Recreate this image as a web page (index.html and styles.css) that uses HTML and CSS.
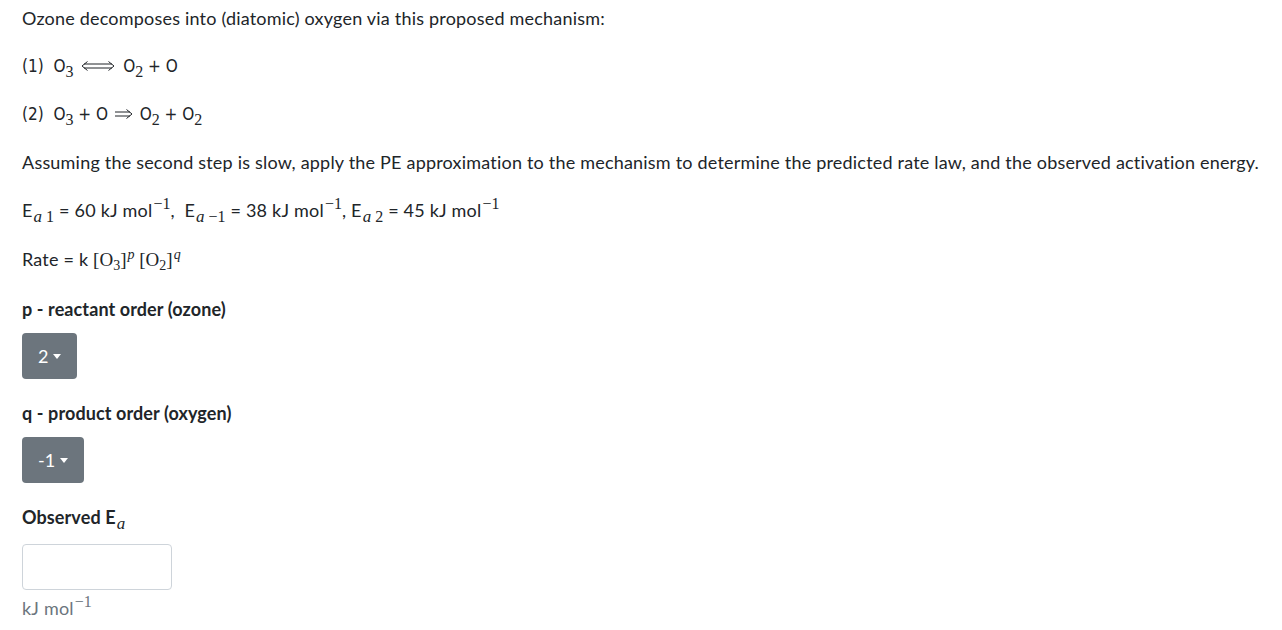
FILE: index.html
```html
<!DOCTYPE html>
<html lang="en">
<head>
    <meta charset="UTF-8">
    <title>Ozone decomposition</title>
    <link rel="stylesheet" href="styles.css">
</head>
<body>
<div class="question">
    <p>Ozone decomposes into (diatomic) oxygen via this proposed mechanism:</p>
    <p class="step">(1)&nbsp; O<sub class="num">3</sub>
        <svg class="arrow long" width="34" height="10" viewBox="0 0 34 10">
            <path d="M3 3H31M3 7H31M6.5 0.5L1 5L6.5 9.5M27.5 0.5L33 5L27.5 9.5" />
        </svg>
        O<sub class="num">2</sub> + O</p>
    <p class="step">(2)&nbsp; O<sub class="num">3</sub> + O
        <svg class="arrow" width="18" height="10" viewBox="0 0 18 10">
            <path d="M0 3H15M0 7H15M11.5 0.5L17 5L11.5 9.5" />
        </svg>
        O<sub class="num">2</sub> + O<sub class="num">2</sub></p>
    <p>Assuming the second step is slow, apply the PE approximation to the mechanism to determine the predicted rate law, and the observed activation energy.</p>
    <p>E<sub class="ea"><i>a</i> 1</sub>= 60 kJ mol<sup class="num">&minus;1</sup>,&nbsp; E<sub class="ea"><i>a</i> &minus;1</sub>= 38 kJ mol<sup class="num">&minus;1</sup>, E<sub class="ea"><i>a</i> 2</sub>= 45 kJ mol<sup class="num">&minus;1</sup></p>
    <p class="rate">Rate = k <span class="math">[O<sub>3</sub>]<sup><i>p</i></sup> [O<sub>2</sub>]<sup><i>q</i></sup></span></p>

    <!-- 反应物级数 -->
    <p class="label">p - reactant order (ozone)</p>
    <div class="dropdown">
        <button type="button" class="btn">2<span class="caret"></span></button>
    </div>

    <!-- 产物级数 -->
    <p class="label">q - product order (oxygen)</p>
    <div class="dropdown">
        <button type="button" class="btn">-1<span class="caret"></span></button>
    </div>

    <!-- 表观活化能 -->
    <p class="label">Observed E<sub class="ea"><i>a</i></sub></p>
    <input type="text" class="answer">
    <p class="unit">kJ mol<sup class="num">&minus;1</sup></p>
</div>
</body>
</html>
```

FILE: styles.css
```css
body {
    margin: 0;
    background: #ffffff;
    color: #212529;
    font: 18px/24px Lato, "Noto Sans", sans-serif;
    letter-spacing: 0.2px;
}
.question {
    padding: 6px 22px;
}
.question p {
    margin: 0 0 24px;
}
sub, sup {
    line-height: 0;
    position: relative;
    vertical-align: baseline;
    letter-spacing: 0;
}
sub {
    bottom: -0.3em;
}
sup {
    top: -0.5em;
    margin-left: 1px;
}
.num {
    font: 16px "Liberation Serif", serif;
}
/* 活化能下标：斜体 a 加编号 */
.ea {
    font: 16px "Liberation Serif", serif;
    margin: 0 5px 0 1px;
}
.label .ea {
    margin-right: 0;
}
.ea i {
    font-size: 17px;
}
/* 反应式一行用窄一点的无衬线字体 */
.step {
    font-family: "Liberation Sans Narrow", "DejaVu Sans Condensed", "Liberation Sans", sans-serif;
    font-size: 17px;
    letter-spacing: 0;
}
.step .num {
    font-size: 16px;
}
.arrow {
    fill: none;
    stroke: #212529;
    stroke-width: 1;
    vertical-align: 1px;
    margin: 0 2px;
}
.arrow.long {
    margin: 0 3px;
}
.rate {
    padding-top: 1px;
}
.question .rate {
    margin-bottom: 25px;
}
.math {
    font-family: "Liberation Serif", serif;
    font-size: 19px;
    letter-spacing: 0;
}
.math sub, .math sup {
    font-size: 14px;
}
.question .label {
    font-weight: bold;
    margin-bottom: 12px;
    letter-spacing: 0.1px;
}
.dropdown {
    margin-bottom: 22px;
}
.btn {
    display: inline-flex;
    align-items: center;
    height: 46px;
    padding: 0 16px;
    font: 18px Lato, sans-serif;
    color: white;
    background: #6c757d;
    border: none;
    border-radius: 4px;
}
.caret {
    display: inline-block;
    margin-left: 5px;
    border-top: 5px solid white;
    border-left: 4px solid transparent;
    border-right: 4px solid transparent;
}
.answer {
    display: block;
    box-sizing: border-box;
    width: 150px;
    height: 46px;
    margin: 15px 0 6px;
    border: 1px solid #ced4da;
    border-radius: 4px;
}
.question .unit {
    color: #6c757d;
    margin: 0;
}
```
